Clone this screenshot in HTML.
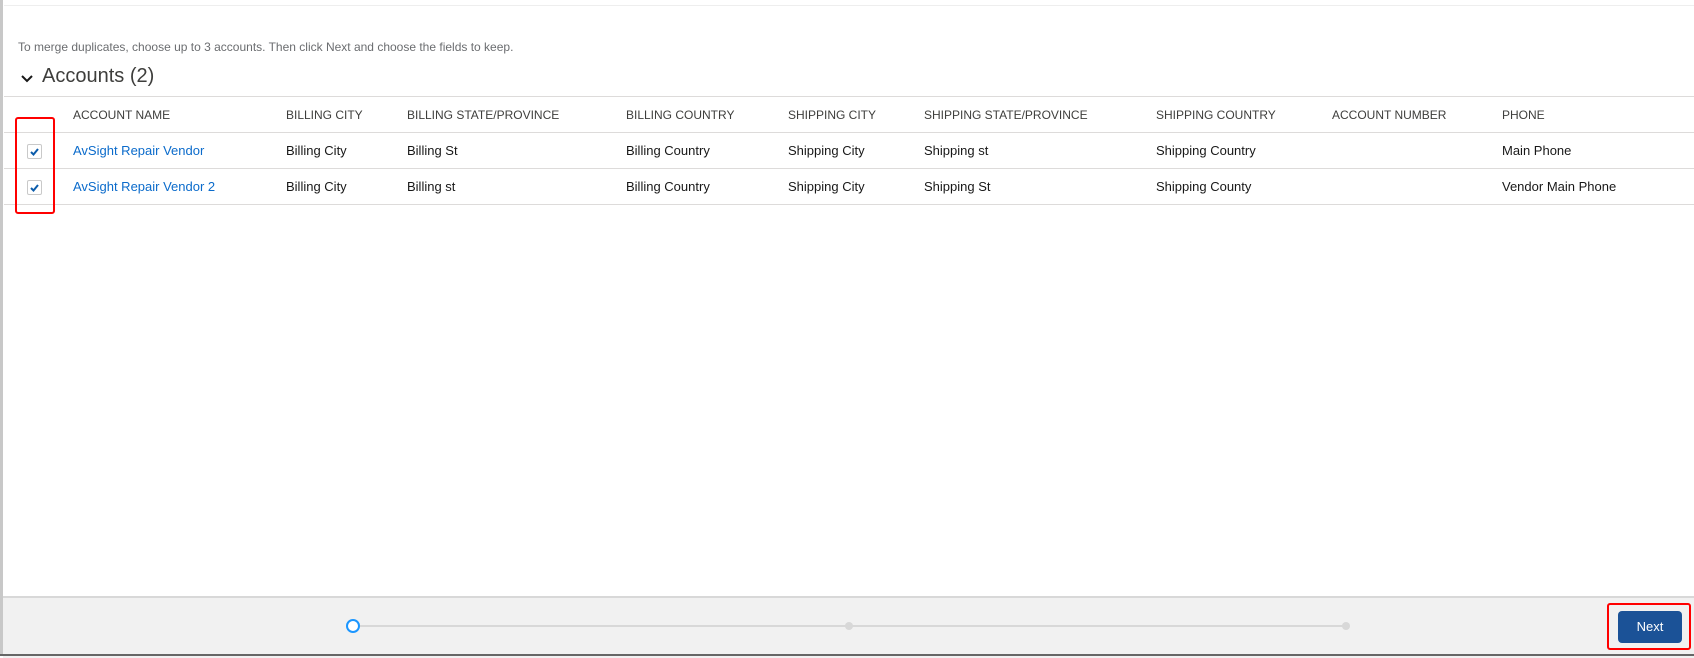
<!DOCTYPE html><html><head><style>
body{margin:0;width:1694px;height:656px;position:relative;background:#fff;font-family:"Liberation Sans",sans-serif;overflow:hidden}
.a{position:absolute;white-space:nowrap}
.h{font-size:12px;color:#3e3e3c;top:108px}
.c{font-size:13px;color:#181818}
.l{position:absolute;left:4px;right:0;height:1px;background:#dddbda}
.cb{position:absolute;left:27px;width:13px;height:13px;border:1px solid #c9c9c9;border-radius:2px;background:#fff}
</style></head><body>
<div class="a" style="left:0;top:0;width:3px;height:656px;background:#c8c8c8"></div>
<div class="l" style="top:5px;background:#eee"></div>
<div class="a" style="left:18px;top:40px;font-size:12px;color:#6b6d70">To merge duplicates, choose up to 3 accounts. Then click Next and choose the fields to keep.</div>
<svg class="a" style="left:20px;top:74px" width="14" height="10"><path d="M2 2l5 5 5-5" stroke="#181818" stroke-width="2" fill="none"/></svg>
<div class="a" style="left:42px;top:65px;font-size:20px;color:#3e3e3c">Accounts (2)</div>
<div class="l" style="top:96px"></div>
<div class="a h" style="left:73px">ACCOUNT NAME</div>
<div class="a h" style="left:286px">BILLING CITY</div>
<div class="a h" style="left:407px">BILLING STATE/PROVINCE</div>
<div class="a h" style="left:626px">BILLING COUNTRY</div>
<div class="a h" style="left:788px">SHIPPING CITY</div>
<div class="a h" style="left:924px">SHIPPING STATE/PROVINCE</div>
<div class="a h" style="left:1156px">SHIPPING COUNTRY</div>
<div class="a h" style="left:1332px">ACCOUNT NUMBER</div>
<div class="a h" style="left:1502px">PHONE</div>
<div class="l" style="top:132px"></div>
<div class="l" style="top:168px"></div>
<div class="l" style="top:204px"></div>
<div class="cb" style="top:144px"><svg width="13" height="13"><path d="M3 7l2.5 2.5L10 4" stroke="#0b5cab" stroke-width="2" fill="none"/></svg></div>
<div class="cb" style="top:180px"><svg width="13" height="13"><path d="M3 7l2.5 2.5L10 4" stroke="#0b5cab" stroke-width="2" fill="none"/></svg></div>
<div class="a" style="left:15px;top:117px;width:36px;height:93px;border:2px solid #f00;border-radius:3px"></div>
<div class="a c" style="left:73px;top:143px;color:#0b6bcb">AvSight Repair Vendor</div>
<div class="a c" style="left:286px;top:143px">Billing City</div>
<div class="a c" style="left:407px;top:143px">Billing St</div>
<div class="a c" style="left:626px;top:143px">Billing Country</div>
<div class="a c" style="left:788px;top:143px">Shipping City</div>
<div class="a c" style="left:924px;top:143px">Shipping st</div>
<div class="a c" style="left:1156px;top:143px">Shipping Country</div>
<div class="a c" style="left:1502px;top:143px">Main Phone</div>
<div class="a c" style="left:73px;top:179px;color:#0b6bcb">AvSight Repair Vendor 2</div>
<div class="a c" style="left:286px;top:179px">Billing City</div>
<div class="a c" style="left:407px;top:179px">Billing st</div>
<div class="a c" style="left:626px;top:179px">Billing Country</div>
<div class="a c" style="left:788px;top:179px">Shipping City</div>
<div class="a c" style="left:924px;top:179px">Shipping St</div>
<div class="a c" style="left:1156px;top:179px">Shipping County</div>
<div class="a c" style="left:1502px;top:179px">Vendor Main Phone</div>
<div class="a" style="left:3px;top:596px;width:1691px;height:60px;background:#f1f1f1;border-top:2px solid #d8d8d8"></div>
<div class="a" style="left:360px;top:625px;width:986px;height:2px;background:#d8d8d8"></div>
<div class="a" style="left:346px;top:619px;width:10px;height:10px;border:2px solid #1b96ff;border-radius:50%;background:#fff"></div>
<div class="a" style="left:845px;top:622px;width:8px;height:8px;border-radius:50%;background:#d8d8d8"></div>
<div class="a" style="left:1342px;top:622px;width:8px;height:8px;border-radius:50%;background:#d8d8d8"></div>
<div class="a" style="left:1618px;top:611px;width:64px;height:32px;background:#1b5297;border-radius:4px;color:#fff;font-size:13px;text-align:center;line-height:32px">Next</div>
<div class="a" style="left:1607px;top:603px;width:80px;height:43px;border:2px solid #f00;border-radius:3px"></div>
<div class="a" style="left:0;top:654px;width:1694px;height:2px;background:#666"></div>
</body></html>
